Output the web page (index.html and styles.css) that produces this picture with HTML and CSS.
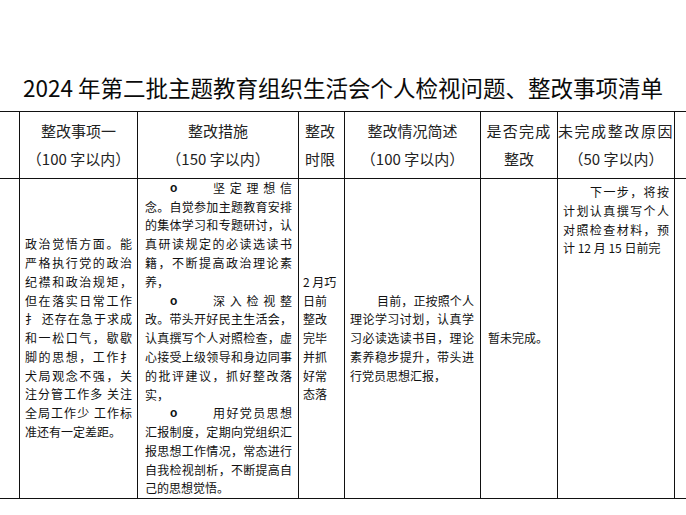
FILE: index.html
```html
<!DOCTYPE html>
<html lang="zh-CN">
<head>
<meta charset="utf-8">
<title>整改事项清单</title>
<link rel="stylesheet" href="styles.css">
</head>
<body>
<div class="page">
  <h1 class="title">2024 年第二批主题教育组织生活会个人检视问题、整改事项清单</h1>
  <div class="table">
    <div class="cell head c0"></div>
    <div class="cell head center"><div>整改事项一</div><div>（100 字以内）</div></div>
    <div class="cell head center"><div>整改措施</div><div>（150 字以内）</div></div>
    <div class="cell head left"><div>整改</div><div>时限</div></div>
    <div class="cell head center"><div>整改情况简述</div><div>（100 字以内）</div></div>
    <div class="cell head center"><div class="spaced">是否完成</div><div>整改</div></div>
    <div class="cell head center"><div class="spaced wide">未完成整改原因</div><div>（50 字以内）</div></div>
    <div class="cell head last"></div>

    <div class="cell body c0"></div>
    <div class="cell body mid p1">
      <div class="j">政治觉悟方面。能</div>
      <div class="j">严格执行党的政治</div>
      <div class="j">纪襟和政治规矩，</div>
      <div class="j">但在落实日常工作</div>
      <div class="j">扌 还存在急于求成</div>
      <div class="j">和一松口气，歇歇</div>
      <div class="j">脚的思想，工作扌</div>
      <div class="j">犬局观念不强，关</div>
      <div class="j">注分管工作多 关注</div>
      <div class="j">全局工作少 工作标</div>
      <div>准还有一定差距。</div>
    </div>
    <div class="cell body mid p2">
      <div class="bl"><span class="o">o</span><span class="j rest">坚定理想信</span></div>
      <div class="j">念。自觉参加主题教育安排</div>
      <div class="j">的集体学习和专题研讨，认</div>
      <div class="j">真研读规定的必读选读书</div>
      <div class="j">籍，不断提高政治理论素</div>
      <div>养，</div>
      <div class="bl"><span class="o">o</span><span class="j rest">深入检视整</span></div>
      <div class="j">改。带头开好民主生活会，</div>
      <div class="j">认真撰写个人对照检查，虚</div>
      <div class="j">心接受上级领导和身边同事</div>
      <div class="j">的批评建议，抓好整改落</div>
      <div>实，</div>
      <div class="bl"><span class="o">o</span><span class="j rest">用好党员思想</span></div>
      <div class="j">汇报制度，定期向党组织汇</div>
      <div class="j">报思想工作情况，常态进行</div>
      <div class="j">自我检视剖析，不断提高自</div>
      <div>己的思想觉悟。</div>
    </div>
    <div class="cell body mid p3">
      <div>2 月巧</div>
      <div>日前</div>
      <div>整改</div>
      <div>完毕</div>
      <div>并抓</div>
      <div>好常</div>
      <div>态落</div>
    </div>
    <div class="cell body mid p4">
      <div class="j ind">目前，正按照个人</div>
      <div class="j">理论学习讨划，认真学</div>
      <div class="j">习必读选读书目，理论</div>
      <div class="j">素养稳步提升，带头进</div>
      <div>行党员思想汇报，</div>
    </div>
    <div class="cell body mid p5">
      <div>暂未完成。</div>
    </div>
    <div class="cell body top p6">
      <div class="j ind">下一步，将按</div>
      <div class="j">计划认真撰写个人</div>
      <div class="j">对照检查材料，预</div>
      <div>计 12 月 15 日前完</div>
    </div>
    <div class="cell body last"></div>
  </div>
</div>
</body>
</html>
```

FILE: styles.css
```css
html, body {
  margin: 0;
  padding: 0;
  background: #ffffff;
}

body {
  font-family: "Noto Sans CJK SC", "Noto Sans", sans-serif;
  color: #111111;
}

.page {
  width: 686px;
  height: 515px;
  overflow: hidden;
}

.title {
  margin: 0;
  height: 111px;
  box-sizing: border-box;
  padding-top: 72px;
  font-size: 22.5px;
  line-height: 30px;
  font-weight: normal;
  text-align: center;
  white-space: nowrap;
  color: #0a0a0a;
}

.table {
  display: grid;
  grid-template-columns: 20px 118px 161px 46px 136px 77px 117px 1fr;
  grid-template-rows: 67px 320px;
  border-top: 1px solid #111;
}

.cell {
  box-sizing: border-box;
  border-right: 1px solid #111;
  border-bottom: 1px solid #111;
  overflow: visible;
  min-width: 0;
}

.cell.last {
  border-right: none;
}

.head {
  display: flex;
  flex-direction: column;
  justify-content: center;
  font-size: 15px;
  line-height: 28px;
  color: #222;
  white-space: nowrap;
}

.head.center {
  align-items: center;
}

.head.left {
  align-items: flex-start;
  padding-left: 6px;
}

.spaced {
  letter-spacing: 1.2px;
}

.spaced.wide {
  letter-spacing: 1.6px;
}

.body {
  display: flex;
  flex-direction: column;
  font-size: 12px;
  line-height: 18.8px;
  white-space: nowrap;
}

.body.mid {
  justify-content: center;
}

.body.top {
  justify-content: flex-start;
  padding-top: 4px;
}

.j {
  text-align: justify;
  text-align-last: justify;
}

.ind {
  padding-left: 27px;
}

.p1 {
  padding: 0 5px;
}

.p2 {
  padding: 0 6px 0 7px;
}

.p3 {
  padding-left: 4px;
}

.p4 {
  padding: 0 6px 0 5px;
}

.p5 {
  padding-left: 7px;
}

.p6 {
  padding-left: 5px;
  padding-right: 5px;
}

.bl {
  display: flex;
}

.o {
  width: 68px;
  box-sizing: border-box;
  padding-left: 25px;
  font-family: "Liberation Sans", sans-serif;
  font-weight: bold;
}

.rest {
  flex: 1;
}
```
